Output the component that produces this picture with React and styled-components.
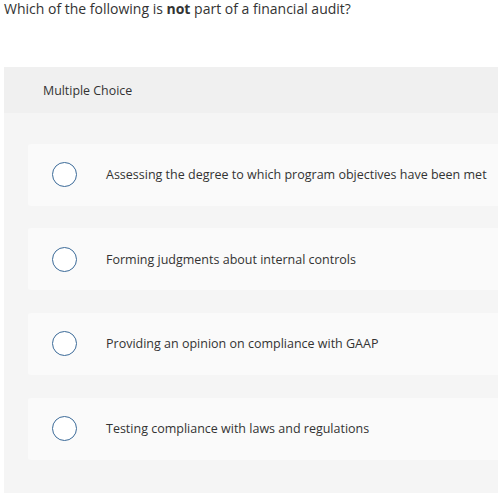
import React from 'react';
import styled, { createGlobalStyle } from 'styled-components';

const GlobalStyle = createGlobalStyle`
  html, body {
    margin: 0;
    padding: 0;
    background: #ffffff;
  }
  body {
    font-family: 'Open Sans', 'Liberation Sans', sans-serif;
    color: #333333;
  }
`;

const Page = styled.div`
  display: flex;
  flex-direction: column;
  padding: 0 0 0 4px;
  min-height: 493px;
  box-sizing: border-box;
`;

const Question = styled.div`
  font-size: 14px;
  line-height: 18px;
  height: 67px;
  color: #333333;

  strong {
    font-weight: 700;
  }
`;

const Panel = styled.div`
  flex: 1;
  display: flex;
  flex-direction: column;
  background-color: #f5f5f5;
`;

const PanelHeader = styled.div`
  background-color: #f0f0f0;
  height: 46px;
  display: flex;
  align-items: center;
  padding-left: 39px;
  font-size: 12.4px;
  color: #333333;
`;

const OptionList = styled.div`
  display: flex;
  flex-direction: column;
  gap: 22.7px;
  padding: 30.5px 0 33px 24px;
`;

const Option = styled.label`
  display: flex;
  align-items: center;
  height: 62px;
  background-color: #fafafa;
  border-radius: 3px 0 0 3px;
  padding-left: 24px;
  cursor: pointer;
`;

const Radio = styled.span`
  width: 23px;
  height: 23px;
  border: 1.5px solid #3b6a98;
  border-radius: 50%;
  background: #ffffff;
  flex-shrink: 0;
`;

const OptionText = styled.span`
  margin-left: 29px;
  font-size: 12.5px;
  color: #333333;
  white-space: nowrap;
`;

const options = [
  'Assessing the degree to which program objectives have been met',
  'Forming judgments about internal controls',
  'Providing an opinion on compliance with GAAP',
  'Testing compliance with laws and regulations',
];

export default function App() {
  return (
    <>
      <GlobalStyle />
      <Page>
        <Question>
          Which of the following is <strong>not</strong> part of a financial audit?
        </Question>
        <Panel>
          <PanelHeader>Multiple Choice</PanelHeader>
          <OptionList>
            {options.map(text => (
              <Option key={text}>
                <Radio />
                <OptionText>{text}</OptionText>
              </Option>
            ))}
          </OptionList>
        </Panel>
      </Page>
    </>
  );
}
